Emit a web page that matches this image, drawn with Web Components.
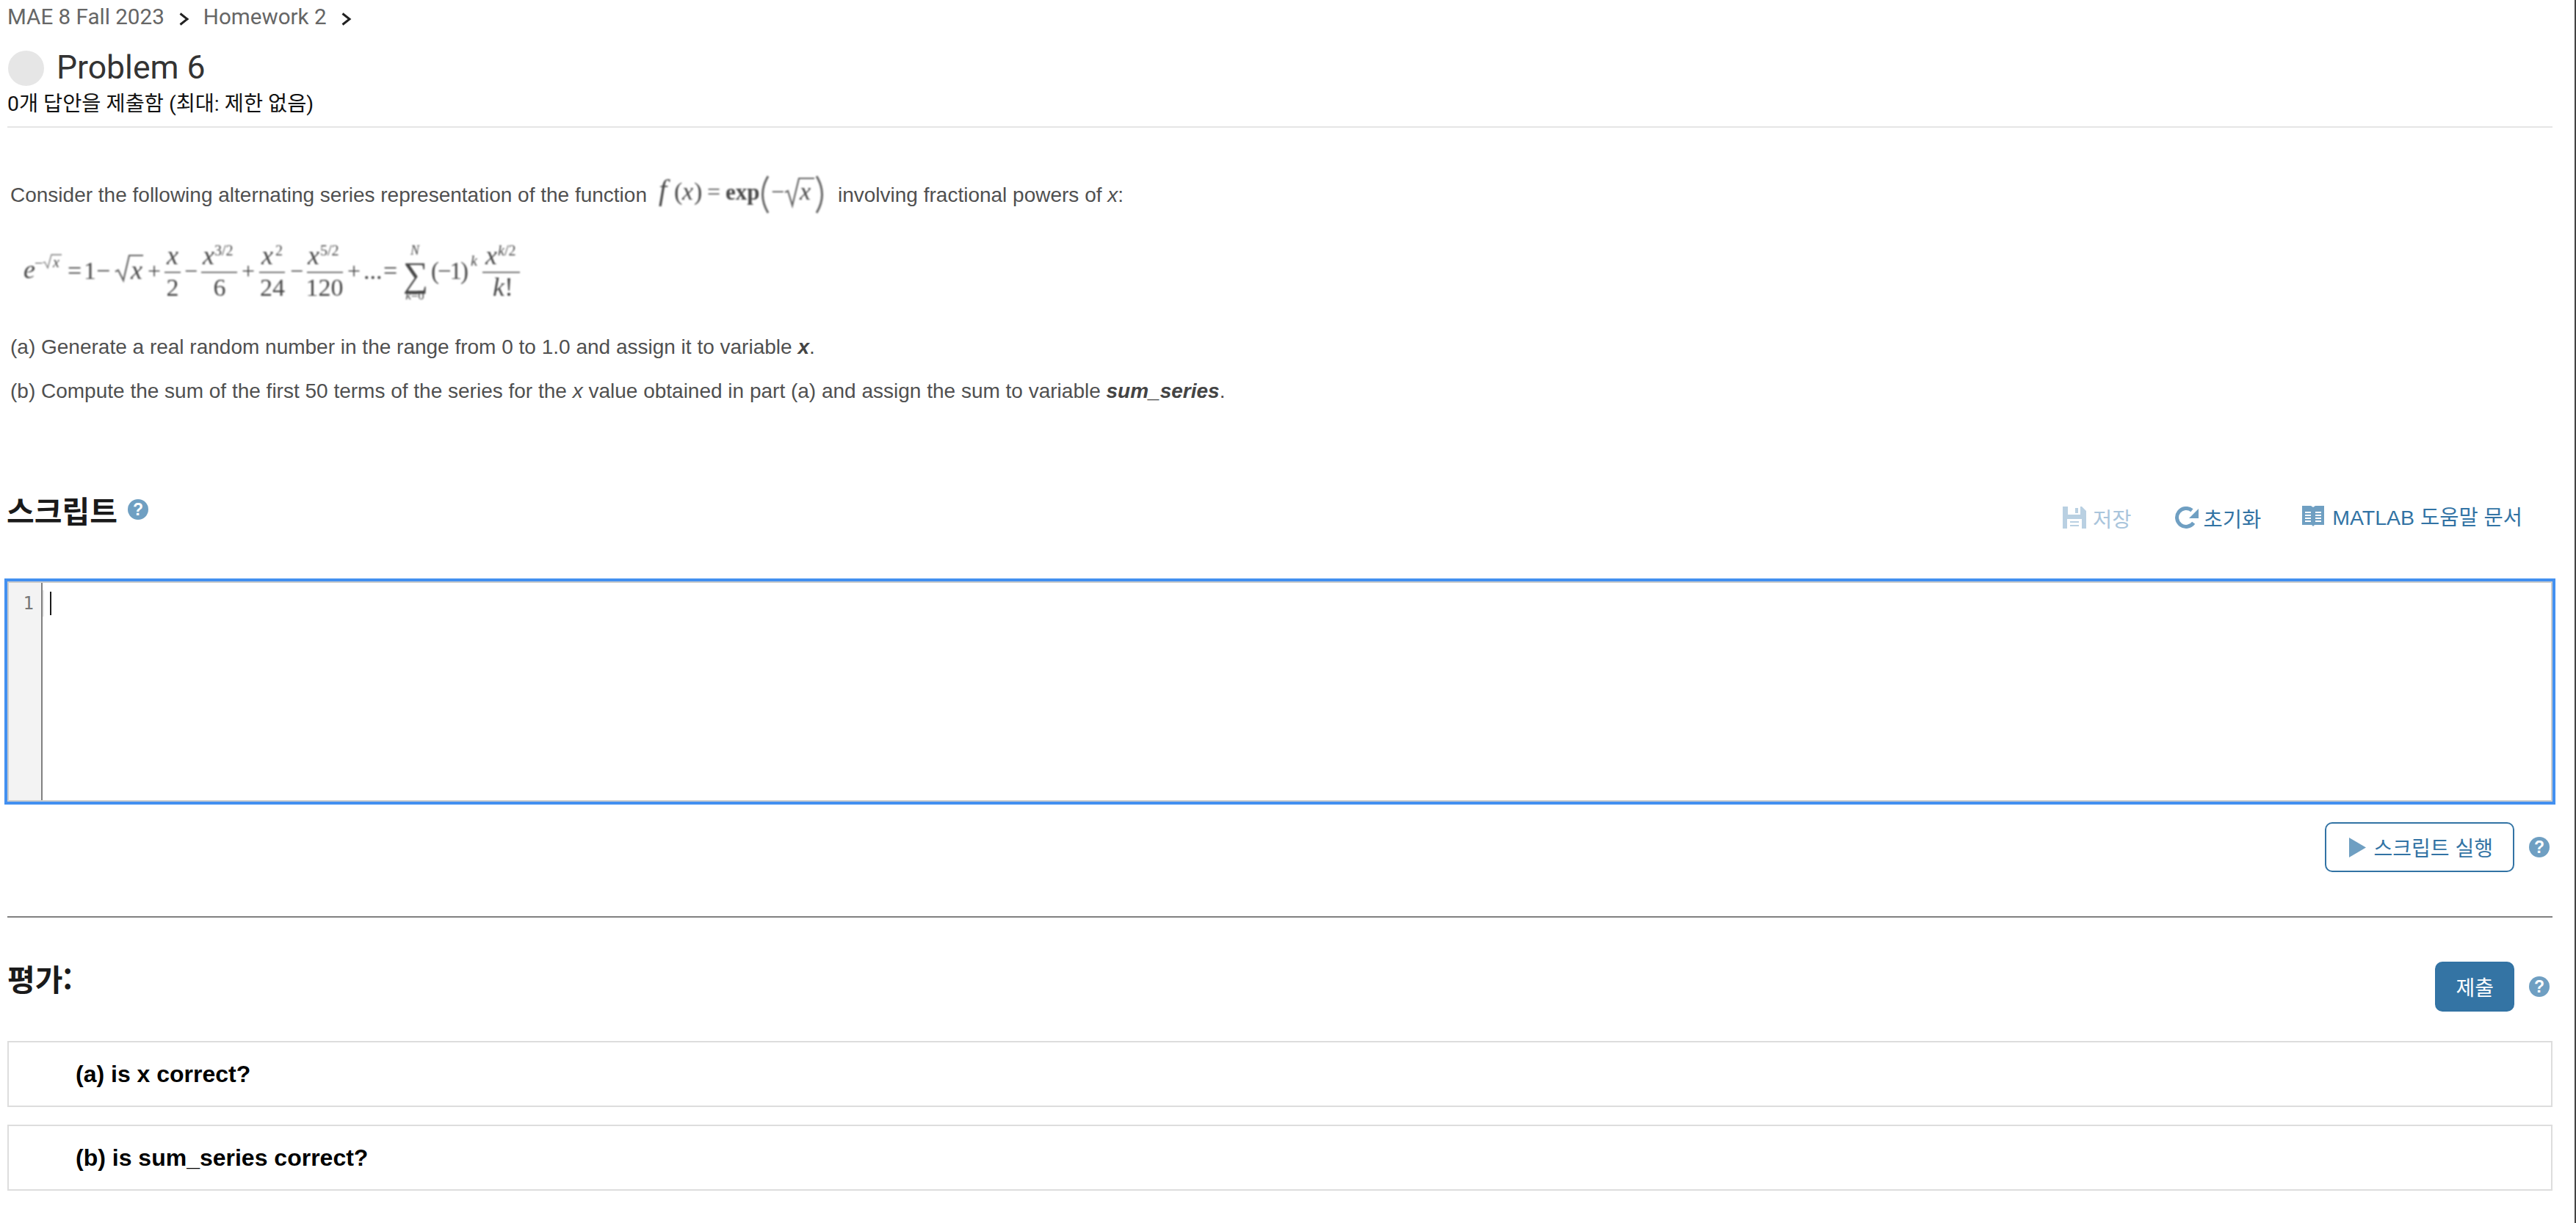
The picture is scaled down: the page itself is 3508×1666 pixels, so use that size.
<!DOCTYPE html>
<html lang="ko">
<head>
<meta charset="utf-8">
<title>Problem 6</title>
<style>
  html, body { margin: 0; padding: 0; background: #fff; }
  body { width: 3508px; height: 1666px; overflow: hidden; box-sizing: border-box; border-right: 2px solid #444; font-family: "Liberation Sans", "Noto Sans CJK KR", sans-serif; }
</style>
</head>
<body>

<template id="help-tpl">
  <style>
    :host { display: inline-flex; width: 28px; height: 28px; flex: none; }
    svg { width: 28px; height: 28px; display: block; }
  </style>
  <svg viewBox="0 0 28 28">
    <circle cx="14" cy="14" r="14" fill="#6f9fc2"/>
    <text x="14" y="22" text-anchor="middle" font-family="Liberation Sans, sans-serif" font-weight="700" font-size="23" fill="#fff">?</text>
  </svg>
</template>

<script>
  function shadowFrom(host, html) {
    const shadow = host.attachShadow({ mode: 'open' });
    shadow.innerHTML = html;
    return shadow;
  }

  customElements.define('help-icon', class extends HTMLElement {
    constructor() {
      super();
      const shadow = this.attachShadow({ mode: 'open' });
      shadow.appendChild(document.getElementById('help-tpl').content.cloneNode(true));
    }
  });

  customElements.define('crumb-bar', class extends HTMLElement {
    constructor() {
      super();
      shadowFrom(this, `
        <style>
          :host { display: flex; align-items: center; height: 46px; padding-left: 10px; font: 400 29.6px Roboto, "Liberation Sans", sans-serif; color: #666; }
          svg { width: 14px; height: 18px; margin: 6px 19px 0 20px; }
        </style>
        <span>MAE 8 Fall 2023</span>
        <svg viewBox="0 0 14 18"><path d="M1.5 1.5 L11 9 L1.5 16.5" fill="none" stroke="#222" stroke-width="3"/></svg>
        <span>Homework 2</span>
        <svg viewBox="0 0 14 18"><path d="M1.5 1.5 L11 9 L1.5 16.5" fill="none" stroke="#222" stroke-width="3"/></svg>
      `);
    }
  });

  customElements.define('problem-title', class extends HTMLElement {
    constructor() {
      super();
      shadowFrom(this, `
        <style>
          :host { display: block; padding: 23px 0 0 0; margin: 0 30px 0 10px; height: 128px; box-sizing: border-box; border-bottom: 2px solid #e5e5e5; color: #333; font-family: Roboto, "Liberation Sans", "Noto Sans CJK KR", sans-serif; }
          .head { display: flex; align-items: center; gap: 17px; height: 48px; font-size: 44.5px; }
          .head span.t { margin-top: -3px; }
          .dot { width: 49px; height: 48px; border-radius: 50%; background: #e6e6e6; margin-left: 1px; }
          .sub { font-size: 28.4px; color: #111; line-height: 40px; margin-top: 5px; }
        </style>
        <div class="head"><span class="dot"></span><span class="t"><slot></slot></span></div>
        <div class="sub"><slot name="sub"></slot></div>
      `);
    }
  });

  customElements.define('problem-text', class extends HTMLElement {
    constructor() {
      super();
      shadowFrom(this, `
        <style>
          :host { display: block; padding: 64px 0 0 14px; height: 470px; box-sizing: border-box; font: 28px/40px "Liberation Sans", sans-serif; color: #505050; }
          p { margin: 0; }
          .first { display: flex; align-items: center; height: 56px; white-space: pre; }
          .eq { display: block; margin: 28px 0 0 16px; }
          .a { margin-top: 35px; }
          .b { margin-top: 20px; }
          svg { filter: blur(0.8px); }
          svg text { font-family: "Liberation Serif", serif; fill: #474747; }
          .inline { margin: -4px 10px 0; flex: none; }
          b { color: #444; }
        </style>
        <p class="first"><span>Consider the following alternating series representation of the function</span><svg class="inline" width="240" height="60" viewBox="0 0 240 60">
            <text x="6" y="38" font-size="40" font-style="italic">f</text>
            <text x="27" y="38" font-size="34">(</text>
            <text x="38" y="38" font-size="34" font-style="italic">x</text>
            <text x="54" y="38" font-size="34">)</text>
            <text x="72" y="38" font-size="32">=</text>
            <text x="97" y="38" font-size="31" font-weight="700">exp</text>
            <path d="M155 6 Q140 31 155 56" fill="none" stroke="#666" stroke-width="3"/>
            <text x="159" y="38" font-size="32">−</text>
            <path d="M178 28 L182 26 L188 46 L197 9 L218 9" fill="none" stroke="#666" stroke-width="2.2"/>
            <text x="198" y="38" font-size="34" font-style="italic">x</text>
            <path d="M221 6 Q236 31 221 56" fill="none" stroke="#666" stroke-width="3"/>
          </svg><span>involving fractional powers of <i>x</i>:</span></p>
        <svg class="eq" width="690" height="96" viewBox="30 322 690 96">
          <text x="32" y="379" font-size="36" font-style="italic">e</text>
          <text x="47" y="365" font-size="20">−</text>
          <path d="M58 358 L61 357 L65 365 L70 347 L84 347" fill="none" stroke="#777" stroke-width="1.3"/>
          <text x="72" y="364" font-size="20" font-style="italic">x</text>
          <text x="92" y="380" font-size="34">=</text>
          <text x="114" y="380" font-size="34">1</text>
          <text x="131" y="380" font-size="34">−</text>
          <path d="M157 370 L161 368 L168 382 L176 348 L195 348" fill="none" stroke="#666" stroke-width="2.2"/>
          <text x="178" y="380" font-size="36" font-style="italic">x</text>
          <text x="201" y="380" font-size="32">+</text>

          <text x="235" y="360" font-size="36" font-style="italic" text-anchor="middle">x</text>
          <rect x="224" y="370" width="22" height="2" fill="#777"/>
          <text x="235" y="403" font-size="34" text-anchor="middle">2</text>
          <text x="251" y="380" font-size="32">−</text>

          <text x="276" y="360" font-size="36" font-style="italic">x</text>
          <text x="292" y="348" font-size="20">3/2</text>
          <rect x="274" y="370" width="49" height="2" fill="#777"/>
          <text x="299" y="403" font-size="34" text-anchor="middle">6</text>
          <text x="329" y="380" font-size="32">+</text>

          <text x="356" y="360" font-size="36" font-style="italic">x</text>
          <text x="375" y="348" font-size="20">2</text>
          <rect x="353" y="370" width="35" height="2" fill="#777"/>
          <text x="371" y="403" font-size="34" text-anchor="middle">24</text>
          <text x="395" y="380" font-size="32">−</text>

          <text x="419" y="360" font-size="36" font-style="italic">x</text>
          <text x="436" y="348" font-size="20">5/2</text>
          <rect x="418" y="370" width="49" height="2" fill="#777"/>
          <text x="442" y="403" font-size="34" text-anchor="middle">120</text>
          <text x="473" y="380" font-size="32">+</text>
          <text x="495" y="380" font-size="34">...</text>
          <text x="522" y="380" font-size="34">=</text>

          <text x="565" y="347" font-size="18" font-style="italic" text-anchor="middle">N</text>
          <text x="566" y="390" font-size="48" text-anchor="middle">∑</text>
          <text x="565" y="408" font-size="17" text-anchor="middle"><tspan font-style="italic">k</tspan>=0</text>
          <text x="587" y="380" font-size="33" textLength="51" lengthAdjust="spacing">(−1)</text>
          <text x="641" y="362" font-size="20" font-style="italic">k</text>

          <text x="661" y="360" font-size="36" font-style="italic">x</text>
          <text x="678" y="348" font-size="20" font-style="italic">k<tspan font-style="normal">/2</tspan></text>
          <rect x="657" y="370" width="51" height="2" fill="#777"/>
          <text x="685" y="403" font-size="36" text-anchor="middle"><tspan font-style="italic">k</tspan>!</text>
        </svg>
        <p class="a">(a) Generate a real random number in the range from 0 to 1.0 and assign it to variable <b><i>x</i></b>.</p>
        <p class="b">(b) Compute the sum of the first 50 terms of the series for the <i>x</i> value obtained in part (a) and assign the sum to variable <b><i>sum_series</i></b>.</p>
      `);
    }
  });

  customElements.define('tool-link', class extends HTMLElement {
    constructor() {
      super();
      shadowFrom(this, `
        <style>
          :host { display: inline-flex; align-items: center; gap: 9px; color: #3273a4; font: 28.5px "Liberation Sans", "Noto Sans CJK KR", sans-serif; white-space: nowrap; }
          :host([disabled]) { color: #a9c5dc; margin-right: 4px; }
          :host([wide]) { gap: 11px; }
          ::slotted(svg) { display: block; flex: none; }
        </style>
        <slot name="icon"></slot><slot></slot>
      `);
    }
  });

  customElements.define('script-head', class extends HTMLElement {
    constructor() {
      super();
      shadowFrom(this, `
        <style>
          :host { display: flex; align-items: center; height: 100px; margin-bottom: 44px; padding: 0 71px 0 9px; }
          h2 { margin: 0; font: 700 41px "Noto Sans CJK KR", sans-serif; color: #1a1a1a; }
          help-icon { margin-left: 14px; }
          .tools { margin-left: auto; display: flex; gap: 56px; align-items: center; padding-top: 22px; }
        </style>
        <h2>스크립트</h2><help-icon></help-icon>
        <div class="tools"><slot></slot></div>
      `);
    }
  });

  customElements.define('code-editor', class extends HTMLElement {
    constructor() {
      super();
      shadowFrom(this, `
        <style>
          :host { display: flex; width: 3474px; height: 308px; box-sizing: border-box; margin-left: 6px; border: 4px solid #4390f0; outline: 2px solid #ccc; outline-offset: -6px; background: #fff; }
          .gutter { width: 44px; margin: 2px 0 2px 2px; background: #f3f3f3; border-right: 2px solid #808080; text-align: right; font: 24px/32px "DejaVu Sans Mono", monospace; color: #777; padding-top: 12px; }
          .gutter span { display: block; padding-right: 10px; }
          .line { flex: 1; position: relative; }
          .mark { position: absolute; left: 0; top: 12px; width: 2px; height: 36px; background: #e8e8e8; }
          .caret { position: absolute; left: 10px; top: 14px; width: 2px; height: 32px; background: #1a1a1a; }
        </style>
        <div class="gutter"><span>1</span></div>
        <div class="line"><span class="mark"></span><span class="caret"></span></div>
      `);
    }
  });

  customElements.define('action-row', class extends HTMLElement {
    constructor() {
      super();
      shadowFrom(this, `
        <style>
          :host { display: flex; align-items: center; justify-content: flex-end; gap: 20px; padding-right: 34px; height: 68px; }
        </style>
        <slot></slot><help-icon></help-icon>
      `);
    }
  });

  customElements.define('ml-button', class extends HTMLElement {
    constructor() {
      super();
      shadowFrom(this, `
        <style>
          :host { display: inline-flex; align-items: center; justify-content: center; gap: 11px; box-sizing: border-box; height: 68px; border-radius: 10px; border: 2px solid #3273a4; color: #3273a4; background: #fff; padding: 0 27px 0 31px; font: 28px "Noto Sans CJK KR", sans-serif; white-space: nowrap; }
          :host([primary]) { background: #3474a4; color: #fff; padding: 0 26px; }
          ::slotted(svg) { width: 23px; height: 27px; display: block; flex: none; }
        </style>
        <slot name="icon"></slot><slot></slot>
      `);
    }
  });

  customElements.define('assess-head', class extends HTMLElement {
    constructor() {
      super();
      shadowFrom(this, `
        <style>
          :host { display: block; box-sizing: border-box; height: 170px; margin-top: 60px; padding-left: 10px; }
          .rule { height: 2px; background: #808080; margin-right: 30px; }
          .row { display: flex; justify-content: space-between; margin-top: 60px; }
          h2 { margin: -6px 0 0; font: 700 41px/56px "Noto Sans CJK KR", sans-serif; color: #1a1a1a; }
        </style>
        <div class="rule"></div>
        <div class="row"><h2>평가:</h2><slot></slot></div>
      `);
    }
  });

  customElements.define('test-row', class extends HTMLElement {
    constructor() {
      super();
      shadowFrom(this, `
        <style>
          :host { display: flex; align-items: center; box-sizing: border-box; height: 90px; margin: 0 30px 24px 10px; padding-left: 91px; border: 2px solid #ddd; font: 700 32px "Liberation Sans", sans-serif; color: #000; }
        </style>
        <slot></slot>
      `);
    }
  });
</script>

<crumb-bar></crumb-bar>
<problem-title>Problem 6<span slot="sub">0개 답안을 제출함 (최대: 제한 없음)</span></problem-title>
<problem-text></problem-text>

<script-head>
  <tool-link disabled>
    <svg slot="icon" width="32" height="30" viewBox="0 0 32 30"><path fill="#b9d0e2" fill-rule="evenodd" d="M0 0H26L32 6V30H0Z M7 0V11H24V0Z M17 2H21V9H17Z M6 17V30H26V17Z M10 20H22V22H10Z M10 25H22V27H10Z"/></svg>
    저장
  </tool-link>
  <tool-link>
    <svg slot="icon" width="32" height="30" viewBox="0 0 32 30" style="margin-right:-3px"><path d="M25.2 22.2A12.5 12.5 0 1 1 23 5.3" fill="none" stroke="#6f9fc2" stroke-width="5"/><path d="M32 3V16H19Z" fill="#6f9fc2"/></svg>
    초기화
  </tool-link>
  <tool-link wide style="margin-top:-5px">
    <svg slot="icon" width="30" height="28" viewBox="0 0 30 28"><path fill="#6f9fc2" d="M0 0H12L15 2L18 0H30V26H17L15 28L13 26H0Z"/><path stroke="#fff" stroke-width="2" d="M4 9H12M4 13H12M4 17H12M4 21H12M18 9H26M18 13H26M18 17H26M18 21H26"/></svg>
    MATLAB 도움말 문서
  </tool-link>
</script-head>

<code-editor></code-editor>

<action-row style="margin-top:24px">
  <ml-button>
    <svg slot="icon" viewBox="0 0 23 27"><path d="M0 0L23 13.5L0 27Z" fill="#6f9fc2"/></svg>
    스크립트 실행
  </ml-button>
</action-row>

<assess-head>
  <action-row><ml-button primary>제출</ml-button></action-row>
</assess-head>

<test-row>(a) is x correct?</test-row>
<test-row>(b) is sum_series correct?</test-row>

</body>
</html>
